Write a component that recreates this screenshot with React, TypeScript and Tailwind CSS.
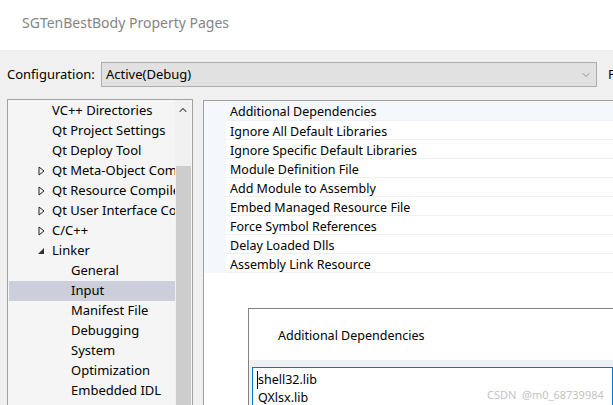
import { ChevronDown, ChevronUp } from "lucide-react";

type TreeItem = {
  label: string;
  level: 1 | 2;
  arrow?: "closed" | "open";
  selected?: boolean;
};

const tree: TreeItem[] = [
  { label: "VC++ Directories", level: 1 },
  { label: "Qt Project Settings", level: 1 },
  { label: "Qt Deploy Tool", level: 1 },
  { label: "Qt Meta-Object Compiler", level: 1, arrow: "closed" },
  { label: "Qt Resource Compiler", level: 1, arrow: "closed" },
  { label: "Qt User Interface Compiler", level: 1, arrow: "closed" },
  { label: "C/C++", level: 1, arrow: "closed" },
  { label: "Linker", level: 1, arrow: "open" },
  { label: "General", level: 2 },
  { label: "Input", level: 2, selected: true },
  { label: "Manifest File", level: 2 },
  { label: "Debugging", level: 2 },
  { label: "System", level: 2 },
  { label: "Optimization", level: 2 },
  { label: "Embedded IDL", level: 2 },
  { label: "Windows Metadata", level: 2 },
];

const props = [
  "Additional Dependencies",
  "Ignore All Default Libraries",
  "Ignore Specific Default Libraries",
  "Module Definition File",
  "Add Module to Assembly",
  "Embed Managed Resource File",
  "Force Symbol References",
  "Delay Loaded Dlls",
  "Assembly Link Resource",
];

function Arrow({ kind }: { kind?: "closed" | "open" }) {
  if (kind === "closed")
    return (
      <svg width="7" height="10" viewBox="0 0 7 10" className="block">
        <path d="M1 1 L6 5 L1 9 Z" fill="none" stroke="#222" strokeWidth="1" />
      </svg>
    );
  if (kind === "open")
    return (
      <svg width="7" height="7" viewBox="0 0 7 7" className="block">
        <path d="M6 0 L6 6 L0 6 Z" fill="#333" />
      </svg>
    );
  return null;
}

export default function App() {
  return (
    <div className="relative w-[613px] h-[405px] overflow-hidden bg-[#f0f0f0] text-[13px] text-black font-['Noto_Sans','Noto_Sans_CJK_SC',sans-serif]">
      <div className="h-[50px] bg-white pl-[22px] pt-[12px] text-[14px] text-[#858585]">
        SGTenBestBody Property Pages
      </div>

      <div className="flex items-center h-[49px] pl-[7px]">
        <span className="w-[94px] shrink-0">Configuration:</span>
        <div className="flex items-center justify-between w-[496px] h-[25px] shrink-0 bg-[#e1e1e1] border border-[#adadad] pl-[4px] pr-[4px]">
          <span>Active(Debug)</span>
          <ChevronDown size={12} strokeWidth={1.2} className="text-[#555]" />
        </div>
        <span className="ml-[11px] whitespace-nowrap">Platform:</span>
      </div>

      <div className="flex">
        <div className="ml-[7px] w-[186px] h-[310px] shrink-0 border border-[#a0a0a0] bg-[#f5f5f5] flex">
          <div className="flex-1 min-w-0 pl-px pt-px">
            {tree.map((t) => (
              <div
                key={t.label}
                className={`flex items-center h-[20px] whitespace-nowrap overflow-hidden ${
                  t.selected ? "bg-[#cccedb]" : ""
                }`}
              >
                <div className="w-[43px] shrink-0 flex justify-end pr-[7px]">
                  <Arrow kind={t.arrow} />
                </div>
                <span className={t.level === 2 ? "pl-[19px]" : ""}>{t.label}</span>
              </div>
            ))}
          </div>
          <div className="w-[16px] shrink-0 bg-[#f0f0f0] flex flex-col items-center mr-px">
            <div className="h-[20px] flex items-center">
              <ChevronUp size={12} strokeWidth={2.2} className="text-[#606060]" />
            </div>
            <div className="mt-[46px] w-[15px] flex-1 bg-[#cdcdcd]" />
          </div>
        </div>

        <div className="ml-[10px] flex-1 h-[310px] mt-px border-l border-t border-[#a0a0a0] bg-white text-[12.5px]">
          <div className="flex">
            <div className="w-[22px] shrink-0 bg-[#f4f7fc]" />
            <div className="flex-1">
              {props.map((p, i) => (
                <div
                  key={p}
                  className={`flex items-center pl-[4px] pt-[4px] border-b border-[#edf0f5] whitespace-nowrap ${
                    i === 0 ? "h-[20px] bg-[#f4f7fc]" : "h-[19px] bg-white"
                  }`}
                >
                  {p}
                </div>
              ))}
            </div>
          </div>

          <div className="ml-[44px] mt-[35px] border-l border-t border-[#838383] bg-white">
            <div className="h-[51px] flex items-center pl-[29px] pt-[4px]">Additional Dependencies</div>
            <div className="bg-[#f0f0f0] pt-[7px] pl-[3px]">
              <div className="border border-[#0078d7] bg-white h-[60px] pl-[5px] pt-[3px] leading-[17.5px]">
                <div className="relative">
                  <span className="absolute left-[-1px] top-[0px] w-px h-[18px] bg-black" />
                  shell32.lib
                </div>
                <div>QXlsx.lib</div>
              </div>
            </div>
          </div>
        </div>
      </div>

      <div className="absolute left-[487px] top-[387px] text-[11px] text-[#c4c4c4] whitespace-pre">
        CSDN  @m0_68739984
      </div>
    </div>
  );
}
